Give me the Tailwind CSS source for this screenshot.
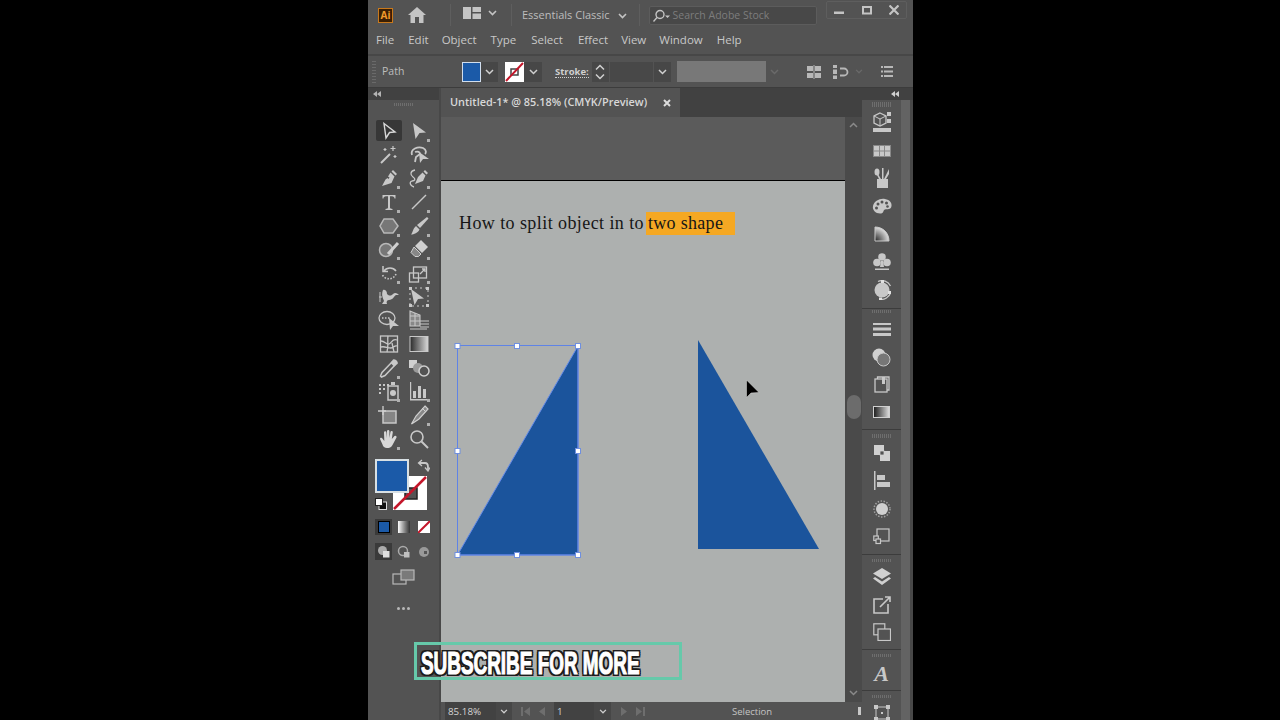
<!DOCTYPE html>
<html><head><meta charset="utf-8"><script src="https://cdn.jsdelivr.net/npm/@tailwindcss/browser@4"></script></head>
<body class="bg-black overflow-hidden">
<div class="relative ml-[368px] w-[545px] h-[720px] bg-[#535353] flex flex-col overflow-hidden font-['Open_Sans',sans-serif] text-[#d4d4d4]">

<!-- title bar -->
<div class="h-[30px] shrink-0 flex items-center bg-[#535353] relative">
  <div class="ml-[10px] w-[15px] h-[15px] bg-[#3a1f04] border border-[#c9791c] flex items-center justify-center text-[10px] leading-none font-bold text-[#f09a2c]">Ai</div>
  <svg class="ml-[15px] w-[18px] h-[16px]" viewBox="0 0 18 16" fill="#c4c4c4"><path d="M9 0 L18 8 H15.500 V16 H11 V10 H7 V16 H2.500 V8 H0Z"/></svg>
  <div class="ml-[24px] w-px h-[22px] bg-[#5e5e5e]"></div>
  <svg class="ml-[12px] w-[18px] h-[12px] -mt-[5px]" viewBox="0 0 18 12" fill="#c4c4c4"><path d="M0 0H8V12H0ZM9.500 0H18V5H9.500ZM9.500 6.500H18V12H9.500Z"/></svg>
  <svg class="ml-[7px] w-[9px] h-[6px] -mt-[4px]" viewBox="0 0 9 6" fill="none" stroke="#c4c4c4" stroke-width="1.600"><path d="M1 1L4.500 4.500L8 1"/></svg>
  <div class="ml-[14px] w-px h-[22px] bg-[#5e5e5e]"></div>
  <span class="ml-[10px] text-[11px] leading-none text-[#bdbdbd] -mt-[1px] whitespace-nowrap">Essentials Classic</span>
  <svg class="ml-[8px] w-[9px] h-[6px] mt-[2px]" viewBox="0 0 9 6" fill="none" stroke="#c4c4c4" stroke-width="1.600"><path d="M1 1L4.500 4.500L8 1"/></svg>
  <div class="ml-[12px] w-px h-[22px] bg-[#5e5e5e]"></div>
  <div class="ml-[9px] w-[168px] h-[19px] bg-[#484848] border border-[#5c5c5c] rounded-[2px] flex items-center mt-[1px]">
    <svg class="ml-[2px] w-[20px] h-[14px]" viewBox="0 0 20 14" fill="none" stroke="#c4c4c4" stroke-width="1.400"><circle cx="8" cy="5.500" r="4"/><path d="M5 8.500L1.500 12.500"/><path d="M13 6.500h5l-2.500 2.500z" fill="#c4c4c4" stroke="none"/></svg>
    <span class="ml-[1px] text-[10.500px] leading-none text-[#7d7d7d] whitespace-nowrap">Search Adobe Stock</span>
  </div>
  <div class="ml-[9px] w-[81px] h-[18px] border border-[#5e5e5e] rounded-[2px] flex items-center -mt-[11px]">
    <svg class="ml-[7px] w-[10px] h-[10px]" viewBox="0 0 10 10" fill="#c4c4c4"><rect y="6.500" width="10" height="2.500"/></svg>
    <svg class="ml-[18px] w-[10px] h-[10px]" viewBox="0 0 10 10" fill="none" stroke="#c4c4c4" stroke-width="2"><rect x="1" y="2" width="8" height="6.500"/></svg>
    <svg class="ml-[17px] w-[10px] h-[10px]" viewBox="0 0 10 10" fill="none" stroke="#c4c4c4" stroke-width="2.200"><path d="M.5 .5L9.500 9.500M9.500 .5L.5 9.500"/></svg>
  </div>
</div>

<!-- menu -->
<div class="h-[24px] shrink-0 flex items-center pb-[4px] text-[11.500px] leading-none text-[#c8c8c8] whitespace-nowrap">
  <span class="ml-[8px]">File</span><span class="ml-[14px]">Edit</span><span class="ml-[13px]">Object</span><span class="ml-[14px]">Type</span><span class="ml-[15px]">Select</span><span class="ml-[15px]">Effect</span><span class="ml-[13px]">View</span><span class="ml-[13px]">Window</span><span class="ml-[14px]">Help</span>
</div>

<!-- control bar -->
<div class="h-[34px] shrink-0 flex items-center border-t-2 border-b border-t-[#474747] border-b-[#3c3c3c] bg-[#535353]">
  <div class="ml-[4px] w-[4px] h-[22px] bg-[repeating-linear-gradient(0deg,#6a6a6a_0_1px,transparent_1px_3px)]"></div>
  <span class="ml-[6px] w-[80px] text-[10.500px] leading-none text-[#bdbdbd]">Path</span>
  <div class="w-[19px] h-[20px] bg-[#1b5aa8] border border-white/80"></div>
  <div class="w-[17px] h-[20px] bg-[#474747] flex items-center justify-center"><svg class="w-[9px] h-[6px]" viewBox="0 0 9 6" fill="none" stroke="#d0d0d0" stroke-width="1.500"><path d="M1 1L4.500 4.500L8 1"/></svg></div>
  <svg class="ml-[7px] w-[19px] h-[20px]" viewBox="0 0 19 20"><rect width="19" height="20" fill="#fff"/><rect x="6" y="7" width="7" height="6" fill="none" stroke="#444" stroke-width="1.500"/><path d="M1 19L18 1" stroke="#c4162a" stroke-width="2"/></svg>
  <div class="w-[18px] h-[20px] bg-[#474747] flex items-center justify-center"><svg class="w-[9px] h-[6px]" viewBox="0 0 9 6" fill="none" stroke="#d0d0d0" stroke-width="1.500"><path d="M1 1L4.500 4.500L8 1"/></svg></div>
  <span class="ml-[13px] mt-[2px] text-[9.500px] leading-none font-bold text-[#cfcfcf] border-b border-dotted border-[#cfcfcf] pb-[1px]">Stroke:</span>
  <div class="ml-[3px] w-[17px] h-[20px] bg-[#474747] flex items-center justify-center"><svg class="w-[10px] h-[16px]" viewBox="0 0 10 16" fill="none" stroke="#d0d0d0" stroke-width="1.500"><path d="M1 5.500L5 1.500L9 5.500M1 10.500L5 14.500L9 10.500"/></svg></div>
  <div class="ml-px w-[43px] h-[20px] bg-[#484848]"></div>
  <div class="ml-px w-[17px] h-[20px] bg-[#474747] flex items-center justify-center"><svg class="w-[9px] h-[6px]" viewBox="0 0 9 6" fill="none" stroke="#d0d0d0" stroke-width="1.500"><path d="M1 1L4.500 4.500L8 1"/></svg></div>
  <div class="ml-[6px] w-[89px] h-[21px] bg-[#787878]"></div>
  <svg class="ml-[4px] w-[9px] h-[6px]" viewBox="0 0 9 6" fill="none" stroke="#6a6a6a" stroke-width="1.500"><path d="M1 1L4.500 4.500L8 1"/></svg>
  <svg class="ml-[28px] w-[14px] h-[14px]" viewBox="0 0 14 14" fill="#b8b8b8"><path d="M0 1H6V6H0ZM8 1H14V6H8ZM0 8H6V13H0ZM8 8H14V13H8Z"/><path d="M7 0V14" stroke="#b8b8b8"/></svg>
  <svg class="ml-[12px] w-[16px] h-[14px]" viewBox="0 0 16 14" fill="#b8b8b8"><path d="M0 0H4V3H0ZM0 4.500H4V9H0ZM0 10.500H4V14H0Z"/><path d="M7 3.500H11A3.500 3.500 0 0 1 11 10.500H7" fill="none" stroke="#b8b8b8" stroke-width="1.800"/></svg>
  <svg class="ml-[6px] w-[8px] h-[5px]" viewBox="0 0 9 6" fill="none" stroke="#6a6a6a" stroke-width="1.500"><path d="M1 1L4.500 4.500L8 1"/></svg>
  <svg class="ml-[18px] w-[12px] h-[11px]" viewBox="0 0 12 11" fill="#b8b8b8"><path d="M0 0H2V2H0ZM3 0H12V2H3ZM0 4.500H2V6.500H0ZM3 4.500H12V6.500H3ZM0 9H2V11H0ZM3 9H12V11H3Z"/></svg>
</div>

<!-- main -->
<div class="flex-1 flex min-h-0">
  <!-- left tool panel -->
  <div class="w-[73px] shrink-0 flex flex-col bg-[#535353] border-r-2 border-[#484848]">
    <div class="h-[12px] shrink-0 bg-[#414141] flex items-center pl-[5px]"><svg class="w-[8px] h-[6px]" viewBox="0 0 8 6" fill="#b4b4b4"><path d="M4 0V6L0 3ZM8 0V6L4 3Z"/></svg></div>
    <div class="h-[9px] shrink-0 flex items-center justify-center"><div class="w-[20px] h-[3px] bg-[repeating-linear-gradient(90deg,#6e6e6e_0_1px,transparent_1px_2px)]"></div></div>

    <div class="ml-[7px] mt-[10px] grid grid-cols-[28px_32px] auto-rows-[23.680px] justify-items-center items-center">
      <div class="w-[26px] h-[21px] bg-[#373737] rounded-[2px] flex items-center justify-center"><svg class="w-[16px] h-[18px]" viewBox="0 0 16 18" fill="none" stroke="#d8d8d8" stroke-width="1.400"><path d="M3 1.500L14 10L8.500 10.500L5 16Z"/></svg></div>
      <svg class="w-[22px] h-[22px]" viewBox="0 0 22 22" fill="#c8c8c8"><path d="M5 3L18 12.500L11.500 13L7.500 19Z"/><path d="M19 19h3v3h-3z" fill="#b0b0b0"/></svg>

      <svg class="w-[22px] h-[22px]" viewBox="0 0 22 22" fill="none" stroke="#c8c8c8" stroke-width="2"><path d="M3 19L12 10"/><path d="M15 2v5M12.500 4.500h5M7 4v3M5.500 5.500h3M17 11v3M15.500 12.500h3" stroke-width="1.200"/></svg>
      <svg class="w-[22px] h-[22px]" viewBox="0 0 22 22" fill="none" stroke="#c8c8c8" stroke-width="1.800"><path d="M4 11C2 5 10 2 15 4C19 6 18 9 17 10"/><path d="M7 8C10 7 12 8 12 10L8 13L7 18" /><path d="M11 8L21 15L15 15L12 19Z" fill="#c8c8c8" stroke="none"/></svg>

      <svg class="w-[22px] h-[22px]" viewBox="0 0 22 22" fill="#c8c8c8"><path d="M15 3L19 7L17.500 8.500L13.500 4.500ZM12.500 5.500L16.500 9.500L13.500 16L4 19L7.500 12.500L9.500 11L10.500 12L11.500 10.500L10 9.500Z"/><path d="M19 19h3v3h-3z" fill="#b0b0b0"/></svg>
      <svg class="w-[22px] h-[22px]" viewBox="0 0 22 22" fill="#c8c8c8"><path d="M17 3L20 6L18.500 7.500L15.500 4.500ZM14.500 5.500L17.500 8.500L15 14L7 17L10 10Z"/><path d="M7 3C2 4 2 8 5 10C8 12 7 14 4 14C1 15 2 19 6 20" fill="none" stroke="#c8c8c8" stroke-width="1.300"/><path d="M19 19h3v3h-3z" fill="#b0b0b0"/></svg>

      <svg class="w-[22px] h-[22px]" viewBox="0 0 22 22" fill="#c8c8c8"><path d="M4.500 4H17.500V7.500H16.500C16.500 5.800 15.500 5.200 12 5.200V16.500C12 17.500 13 17.800 14.500 18V19H7.500V18C9 17.800 10 17.500 10 16.500V5.200C6.500 5.200 5.500 5.800 5.500 7.500H4.500Z"/><path d="M19 19h3v3h-3z" fill="#b0b0b0"/></svg>
      <svg class="w-[22px] h-[22px]" viewBox="0 0 22 22" fill="none" stroke="#c8c8c8" stroke-width="1.500"><path d="M4 18L18 4"/><path d="M19 19h3v3h-3z" fill="#b0b0b0" stroke="none"/></svg>

      <svg class="w-[22px] h-[22px]" viewBox="0 0 22 22"><path d="M6 4H15L20 11L15 18H6L2 11Z" fill="#777" stroke="#b8b8b8" stroke-width="1.500"/><path d="M19 19h3v3h-3z" fill="#b0b0b0"/></svg>
      <svg class="w-[22px] h-[22px]" viewBox="0 0 22 22" fill="#c8c8c8"><path d="M19 2L20.500 3.500L12 13L9 10Z"/><path d="M8 11L11.500 14.500C10 18 6 19.500 3 19.500C5 17.500 4.500 14 8 11Z"/><path d="M19 19h3v3h-3z" fill="#b0b0b0"/></svg>

      <svg class="w-[22px] h-[22px]" viewBox="0 0 22 22"><circle cx="8" cy="12" r="6.500" fill="#777" stroke="#b8b8b8" stroke-width="1.500"/><path d="M10 16L20 5" stroke="#d0d0d0" stroke-width="3"/><path d="M19 19h3v3h-3z" fill="#b0b0b0"/></svg>
      <svg class="w-[22px] h-[22px]" viewBox="0 0 22 22" fill="#d0d0d0"><path d="M13 2L20 9L14 15L7 8Z"/><path d="M6 9L13 16L10.500 18.500H7L3 14.500Z" fill="#888" stroke="#d0d0d0"/><path d="M19 19h3v3h-3z" fill="#b0b0b0"/></svg>

      <svg class="w-[22px] h-[22px]" viewBox="0 0 22 22" fill="none" stroke="#c8c8c8" stroke-width="1.600"><path d="M6 9A7.500 7.500 0 0 1 18 9" /><path d="M5 4V9.500H10" stroke-width="1.500"/><path d="M18 12A7.500 7.500 0 0 1 4 12" stroke-dasharray="1.500 1.500"/><path d="M19 19h3v3h-3z" fill="#b0b0b0" stroke="none"/></svg>
      <svg class="w-[22px] h-[22px]" viewBox="0 0 22 22" fill="none" stroke="#c8c8c8" stroke-width="1.300"><rect x="1.500" y="11" width="9" height="9"/><rect x="5.500" y="5" width="13" height="11"/><path d="M12 12L17 7M14 7H17V10" /><path d="M19 19h3v3h-3z" fill="#b0b0b0" stroke="none"/></svg>

      <svg class="w-[22px] h-[22px]" viewBox="0 0 22 22" fill="#c8c8c8"><path d="M5 4C8 3 9 6 9 8C12 11 14 9 15 8C17 6 19 7 21 9L18 9C16 10 15 14 11 14C9 14 8 16 9 18L4 18L6 15C5 12 3 9 5 4Z"/><path d="M2 6v10M1 11h3" stroke="#c8c8c8" fill="none"/></svg>
      <svg class="w-[22px] h-[22px]" viewBox="0 0 22 22" fill="#c8c8c8"><path d="M3 3L16 12.500L10 13L6.500 19Z"/><path d="M2 2H20V20H2Z" fill="none" stroke="#c8c8c8" stroke-width="1" stroke-dasharray="2 3"/><path d="M1 1h3v3H1zM18 1h3v3h-3zM18 18h3v3h-3zM1 18h3v3H1z"/></svg>

      <svg class="w-[22px] h-[22px]" viewBox="0 0 22 22" fill="none" stroke="#c8c8c8" stroke-width="1.300"><ellipse cx="9" cy="9" rx="8" ry="6.500"/><path d="M4 9h8" stroke-dasharray="1.500 1.500"/><path d="M11 9L21 17L15 17L12 21Z" fill="#c8c8c8" stroke="none"/></svg>
      <svg class="w-[22px] h-[22px]" viewBox="0 0 22 22" fill="none" stroke="#c8c8c8" stroke-width="1.100"><path d="M2 2L2 17L12 17L12 6Z" fill="#888"/><path d="M2 7H12M2 12H12M7 4V17"/><path d="M12 12H21M12 15H21M12 18H21M2 20H19"/></svg>

      <svg class="w-[22px] h-[22px]" viewBox="0 0 22 22" fill="none" stroke="#c8c8c8" stroke-width="1.300"><rect x="2.500" y="3" width="17" height="16"/><path d="M3 8C7 8 8 12 11 11C14 10 14 5 19 7M10 3C9 8 11 11 9 19M3 14C7 13 9 15 13 15C16 15 16 12 19 13M14 10L16 19"/></svg>
      <svg class="w-[22px] h-[22px]" viewBox="0 0 22 22"><defs><linearGradient id="g1"><stop offset="0" stop-color="#2a2a2a"/><stop offset="1" stop-color="#d8d8d8"/></linearGradient></defs><rect x="2" y="3.500" width="18" height="15" fill="url(#g1)" stroke="#c8c8c8"/></svg>

      <svg class="w-[22px] h-[22px]" viewBox="0 0 22 22" fill="#c8c8c8"><path d="M14 5L17 8L7 18.500L3.500 20L2.500 19L4 15.500Z" fill="none" stroke="#c8c8c8" stroke-width="1.500"/><path d="M12.500 6L15 2.500C17 1 21 5 19.500 7L16 9.500Z"/><path d="M19 19h3v3h-3z" fill="#b0b0b0"/></svg>
      <svg class="w-[22px] h-[22px]" viewBox="0 0 22 22"><rect x="1" y="3" width="8" height="8" fill="#d0d0d0"/><circle cx="10" cy="11" r="5" fill="#9a9a9a"/><circle cx="16" cy="14" r="5" fill="#535353" stroke="#d0d0d0" stroke-width="1.500"/></svg>

      <svg class="w-[22px] h-[22px]" viewBox="0 0 22 22" fill="#c8c8c8"><path d="M1 4h2v2H1zM5 4h2v2H5zM9 4h2v2H9zM1 8h2v2H1zM5 8h2v2H5zM1 12h2v2H1z"/><path d="M13 2h4v3h-4z"/><path d="M10 6h10v14H10Z" fill="none" stroke="#c8c8c8" stroke-width="1.500"/><circle cx="15" cy="13" r="3"/><path d="M19 19h3v3h-3z" fill="#b0b0b0"/></svg>
      <svg class="w-[22px] h-[22px]" viewBox="0 0 22 22" fill="#c8c8c8"><path d="M2 2h1.200v17H21v1.500H2z"/><path d="M5 11h3v7H5zM10 6h3v12h-3zM15 9h3v9h-3z"/><path d="M19 19h3v3h-3z" fill="#b0b0b0"/></svg>

      <svg class="w-[22px] h-[22px]" viewBox="0 0 22 22"><path d="M5 7H18V19H5Z" fill="#858585" stroke="#c8c8c8" stroke-width="1.500"/><path d="M0 7H8M5 2V11" stroke="#d0d0d0" stroke-width="1.300"/></svg>
      <svg class="w-[22px] h-[22px]" viewBox="0 0 22 22"><path d="M17 2L20 5L11 15L3.500 20L8 12Z" fill="#888" stroke="#d0d0d0" stroke-width="1.200"/><path d="M14 4L18 8" stroke="#d0d0d0"/><path d="M19 19h3v3h-3z" fill="#b0b0b0"/></svg>

      <svg class="w-[22px] h-[22px]" viewBox="0 0 22 22" fill="#d8d8d8"><path d="M6 4.500A1.200 1.200 0 0 1 8.400 4.500L9 10V3.200A1.200 1.200 0 0 1 11.400 3.200V10L12.500 3.800A1.200 1.200 0 0 1 14.800 4.200L13.800 11L16.500 8A1.300 1.300 0 0 1 18.500 9.500L14.500 17C13.500 19.500 11 20 9 20C6.500 20 5 18.500 4.500 16.500L2 11A1.200 1.200 0 0 1 4 10L6.300 13Z"/><path d="M19 19h3v3h-3z" fill="#b0b0b0"/></svg>
      <svg class="w-[22px] h-[22px]" viewBox="0 0 22 22" fill="none" stroke="#c8c8c8" stroke-width="1.600"><circle cx="9" cy="9" r="6"/><path d="M13.500 13.500L20 20" stroke-width="2"/></svg>
    </div>

    <!-- fill / stroke -->
    <div class="relative mt-[9px] ml-[7px] w-[58px] h-[52px] shrink-0">
      <svg class="absolute left-[18px] top-[17px] w-[34px] h-[34px]" viewBox="0 0 34 34"><rect width="34" height="34" fill="#fff"/><rect x="12" y="12" width="12" height="11" fill="#535353" stroke="#222" stroke-width="1.500"/><path d="M1 33L33 1" stroke="#c4162a" stroke-width="2.500"/></svg>
      <div class="absolute left-0 top-0 w-[34px] h-[34px] bg-[#1b5aa8] border-2 border-[#d8e0e4]"></div>
      <svg class="absolute left-[42px] top-0 w-[13px] h-[13px]" viewBox="0 0 13 13" fill="none" stroke="#c8c8c8" stroke-width="1.800"><path d="M2 4H8C10 4 11 5 11 8V11"/><path d="M5 1L1.500 4L5 7M8 8.500L11 12L13 8.500" stroke-width="1.300"/></svg>
      <svg class="absolute left-0 top-[39px] w-[12px] h-[12px]" viewBox="0 0 12 12"><rect x="4" y="4" width="7.500" height="7.500" fill="#111" stroke="#ddd"/><rect x=".5" y=".5" width="7" height="7" fill="#fff" stroke="#222"/></svg>
    </div>
    <div class="mt-[8px] ml-[7px] w-[57px] h-[16px] flex gap-[3px] shrink-0">
      <div class="w-[17px] h-[16px] bg-[#3a3a3a] flex items-center justify-center"><div class="w-[12px] h-[12px] bg-[#1b5aa8] border border-black"></div></div>
      <div class="w-[17px] h-[16px] flex items-center justify-center"><div class="w-[12px] h-[12px] bg-gradient-to-r from-white to-[#333]"></div></div>
      <div class="w-[17px] h-[16px] flex items-center justify-center"><svg class="w-[12px] h-[12px]" viewBox="0 0 12 12"><rect width="12" height="12" fill="#fff"/><path d="M0 12L12 0" stroke="#c4162a" stroke-width="2"/></svg></div>
    </div>
    <div class="mt-[8px] ml-[7px] w-[57px] h-[17px] flex gap-[3px] shrink-0">
      <div class="w-[17px] h-[17px] bg-[#3a3a3a] flex items-center justify-center"><svg class="w-[13px] h-[13px]" viewBox="0 0 13 13"><circle cx="5.500" cy="5.500" r="4.500" fill="#aaa"/><rect x="6" y="6" width="6.500" height="6.500" fill="#e0e0e0"/></svg></div>
      <div class="w-[17px] h-[17px] flex items-center justify-center"><svg class="w-[13px] h-[13px]" viewBox="0 0 13 13"><circle cx="6" cy="6" r="4.500" fill="none" stroke="#aaa" stroke-width="1.500"/><rect x="7" y="7" width="5.500" height="5.500" fill="#c0c0c0"/></svg></div>
      <div class="w-[17px] h-[17px] flex items-center justify-center"><svg class="w-[12px] h-[12px]" viewBox="0 0 12 12"><circle cx="6" cy="6" r="5" fill="#999"/><rect x="6" y="5" width="3" height="3" fill="#555"/></svg></div>
    </div>
    <svg class="mt-[9px] ml-[24px] w-[23px] h-[16px] shrink-0" viewBox="0 0 23 16" fill="none" stroke="#b8b8b8" stroke-width="1.200"><rect x="1" y="5" width="13" height="10" fill="#535353"/><rect x="9" y="1" width="13" height="10" fill="#7a7a7a"/></svg>
    <div class="mt-[22px] ml-[29px] flex gap-[2px] shrink-0"><div class="w-[3px] h-[3px] bg-[#b8b8b8] rounded-full"></div><div class="w-[3px] h-[3px] bg-[#b8b8b8] rounded-full"></div><div class="w-[3px] h-[3px] bg-[#b8b8b8] rounded-full"></div></div>
  </div>

  <!-- centre -->
  <div class="w-[421px] shrink-0 flex flex-col min-w-0">
    <!-- tabs -->
    <div class="h-[29px] shrink-0 flex bg-[#414141]">
      <div class="w-[239px] h-full bg-[#535353] flex items-center">
        <span class="ml-[9px] text-[10.900px] leading-none font-semibold text-[#d8d8d8] whitespace-nowrap">Untitled-1* @ 85.18% (CMYK/Preview)</span>
        <svg class="ml-[16px] w-[8px] h-[8px]" viewBox="0 0 8 8" stroke="#dcdcdc" stroke-width="2"><path d="M1 1L7 7M7 1L1 7"/></svg>
      </div>
    </div>
    <div class="flex-1 flex min-h-0">
      <!-- canvas -->
      <div class="relative w-[404px] shrink-0 flex flex-col">
        <div class="h-[64px] shrink-0 bg-[#5b5b5b] border-b border-black"></div>
        <div class="relative flex-1 bg-[#adb0af] overflow-hidden">
          <div class="absolute left-[18px] top-[31px] h-[23px] flex items-center pb-[2px] font-['Liberation_Serif',serif] text-[18px] leading-none tracking-[0.42px] text-[#161616] whitespace-nowrap">How to split object in to</div>
          <div class="absolute left-[205px] top-[31px] w-[89px] h-[23px] bg-[#f5a823] flex items-center pl-[2px] pb-[2px] font-['Liberation_Serif',serif] text-[18px] leading-none tracking-[0.3px] text-[#161616] whitespace-nowrap">two shape</div>
          <svg class="absolute left-0 top-0 w-[404px] h-[521px]" viewBox="441 181 404 521">
            <path d="M457.500 555L578 346V555Z" fill="#1b549c"/>
            <path d="M698 340V549H819Z" fill="#1b549c"/>
            <path d="M457.500 555L578 346V555Z" fill="none" stroke="#648ae8"/>
            <rect x="457.500" y="345.500" width="120.500" height="209.500" fill="none" stroke="#5f83e6"/>
            <g fill="#fff" stroke="#6f8fdf">
              <rect x="455" y="343.500" width="5" height="5"/><rect x="514.500" y="343.500" width="5" height="5"/><rect x="575.500" y="343.500" width="5" height="5"/>
              <rect x="455" y="448.500" width="5" height="5"/><rect x="575.500" y="448.500" width="5" height="5"/>
              <rect x="455" y="552.500" width="5" height="5"/><rect x="514.500" y="552.500" width="5" height="5"/><rect x="575.500" y="552.500" width="5" height="5"/>
            </g>
            <path d="M746.500 380V397.500L751 393L759 392.500Z" fill="#000" stroke="#ddd" stroke-width=".5"/>
          </svg>
        </div>
        <!-- status -->
        <div class="h-[18px] shrink-0 flex items-center bg-[#535353] text-[9.800px] leading-none text-[#d4d4d4]">
          <div class="ml-[4px] w-[51px] h-full bg-[#424242] flex items-center pl-[3px] pt-[2px]">85.18%</div>
          <div class="w-[16px] h-full bg-[#474747] flex items-center justify-center"><svg class="w-[8px] h-[5px]" viewBox="0 0 9 6" fill="none" stroke="#d0d0d0" stroke-width="1.500"><path d="M1 1L4.500 4.500L8 1"/></svg></div>
          <svg class="ml-[9px] w-[32px] h-[9px]" viewBox="0 0 32 9" fill="#6e6e6e"><path d="M0 0h2v9H0zM9 0V9L3 4.500zM24 0V9L18 4.500z"/></svg>
          <div class="ml-[1px] w-[40px] h-full bg-[#424242] flex items-center pl-[3px] pt-[2px]">1</div>
          <div class="w-[17px] h-full bg-[#474747] flex items-center justify-center"><svg class="w-[8px] h-[5px]" viewBox="0 0 9 6" fill="none" stroke="#d0d0d0" stroke-width="1.500"><path d="M1 1L4.500 4.500L8 1"/></svg></div>
          <svg class="ml-[10px] w-[24px] h-[9px]" viewBox="0 0 24 9" fill="#6e6e6e"><path d="M0 0V9L6 4.500zM15 0V9L21 4.500zM22 0h2v9h-2z"/></svg>
          <span class="ml-[87px] pt-[2px] text-[9.500px] text-[#c4c4c4]">Selection</span>
        </div>
      </div>
      <!-- scrollbar -->
      <div class="w-[17px] shrink-0 bg-[#4a4a4a] flex flex-col items-center">
        <svg class="mt-[5px] w-[9px] h-[6px] shrink-0" viewBox="0 0 9 6" fill="none" stroke="#8a8a8a" stroke-width="1.500"><path d="M1 5L4.500 1.500L8 5"/></svg>
        <div class="mt-[267px] w-[14px] h-[24px] shrink-0 bg-[#6c6c6c] rounded-[7px]"></div>
        <svg class="mt-[271px] w-[9px] h-[6px] shrink-0" viewBox="0 0 9 6" fill="none" stroke="#8a8a8a" stroke-width="1.500"><path d="M1 1L4.500 4.500L8 1"/></svg>
        <div class="mt-auto w-full h-[18px] shrink-0 bg-[#535353] flex items-center justify-end pr-px"><div class="w-[3px] h-[8px] bg-[#c8c8c8]"></div></div>
      </div>
    </div>
  </div>

  <!-- right panels -->
  <div class="w-[39px] shrink-0 flex flex-col bg-[#535353]">
    <div class="h-[12px] shrink-0 bg-[#414141] flex items-center justify-end pr-[2px]"><svg class="w-[8px] h-[6px]" viewBox="0 0 8 6" fill="#d0d0d0"><path d="M4 0V6L0 3ZM8 0V6L4 3Z"/></svg></div>

    <div class="h-[209px] shrink-0 border-b border-[#3c3c3c] flex flex-col items-center">
      <div class="mt-[2px] h-[5px] w-[20px] shrink-0 bg-[repeating-linear-gradient(90deg,#6e6e6e_0_1px,transparent_1px_2px)]"></div>
      <div class="flex flex-col items-center">
        <svg class="mt-[4px] w-[20px] h-[22px]" viewBox="0 0 20 22" fill="#c8c8c8"><path d="M8 2L14 5V12L8 15L2 12V5Z" fill="none" stroke="#c8c8c8" stroke-width="1.300"/><path d="M2 5L8 8L14 5M8 8V15" stroke="#c8c8c8" fill="none"/><path d="M15 1h4v4h-4zM15 8h4v4h-4zM1 17h18v4H1z"/></svg>
        <svg class="mt-[12px] w-[18px] h-[12px]" viewBox="0 0 18 12" fill="#c8c8c8"><rect x="0" y="0" width="18" height="12" fill="#888"/><path d="M1 1h5v4.500H1zM7 1h4v4.500H7zM12 1h5v4.500h-5zM1 6.500h5V11H1zM7 6.500h4V11H7zM12 6.500h5V11h-5z"/></svg>
        <svg class="mt-[10px] w-[18px] h-[21px]" viewBox="0 0 18 21" fill="#c8c8c8"><path d="M4 12h11v9H4z"/><ellipse cx="4" cy="5" rx="2.500" ry="3.500"/><path d="M4 8L6 12H8L5 7ZM9 1h1.500v11H9zM16 2L14 6L11 12H13L16 7Z"/></svg>
        <svg class="mt-[10px] w-[20px] h-[16px]" viewBox="0 0 20 16"><path d="M1 8C2 3 8 0 13 1C18 2 20 5 19.500 8C19 12 15 11 13 11.500C11 12 12 15 9 15.500C4 16 0 12 1 8Z" fill="#c8c8c8"/><g fill="#535353"><circle cx="6" cy="6" r="1.500"/><circle cx="10" cy="4" r="1.500"/><circle cx="14.500" cy="5" r="1.500"/><circle cx="15.500" cy="8.500" r="1.300"/><circle cx="4.500" cy="10" r="1.500"/></g></svg>
        <svg class="mt-[12px] w-[16px] h-[16px]" viewBox="0 0 16 16"><defs><radialGradient id="g2" cx="0" cy="1" r="1"><stop offset="0" stop-color="#222"/><stop offset="1" stop-color="#ddd"/></radialGradient></defs><path d="M1 1C9 1 15 7 15 15H1Z" fill="url(#g2)" stroke="#c8c8c8"/></svg>
        <svg class="mt-[11px] w-[18px] h-[17px]" viewBox="0 0 18 17" fill="#c8c8c8"><circle cx="9" cy="4" r="3.800"/><circle cx="4" cy="9.500" r="3.800"/><circle cx="14" cy="9.500" r="3.800"/><path d="M8 8h2l1 6H7zM2 15.500h14V17H2z"/></svg>
        <svg class="mt-[10px] w-[20px] h-[20px]" viewBox="0 0 20 20"><circle cx="10" cy="10" r="7.500" fill="#c8c8c8"/><path d="M6 1.500A9.500 9.500 0 0 1 18.500 6M18.500 13A9.500 9.500 0 0 1 8 19.300" fill="none" stroke="#c8c8c8" stroke-width="1.300"/><path d="M9 0h3v3H9zM16 11h3v3h-3zM7 17.500h3v2.500H7z" fill="#e0e0e0"/></svg>
      </div>
    </div>

    <div class="h-[121px] shrink-0 border-b border-[#3c3c3c] flex flex-col items-center">
      <div class="mt-[1px] h-[3px] w-[20px] shrink-0 bg-[repeating-linear-gradient(90deg,#6e6e6e_0_1px,transparent_1px_2px)]"></div>
      <svg class="mt-[10px] w-[18px] h-[13px] shrink-0" viewBox="0 0 18 13" fill="#c8c8c8"><path d="M0 0h18v2H0zM0 4.500h18v3H0zM0 10h18v3H0z"/></svg>
      <svg class="mt-[12px] w-[19px] h-[19px] shrink-0" viewBox="0 0 19 19"><circle cx="7" cy="7" r="6.500" fill="#d0d0d0"/><circle cx="11.500" cy="11.500" r="6.500" fill="#777" stroke="#c8c8c8"/></svg>
      <svg class="mt-[9px] w-[16px] h-[17px] shrink-0" viewBox="0 0 16 17" fill="none" stroke="#c8c8c8" stroke-width="1.300"><rect x="1" y="3" width="12" height="13"/><path d="M3.500 3V1H15V14H13"/><path d="M8 1h3v7h-3z" fill="#c8c8c8" stroke="none"/></svg>
      <svg class="mt-[13px] w-[17px] h-[12px] shrink-0" viewBox="0 0 17 12"><defs><linearGradient id="g3"><stop offset="0" stop-color="#1a1a1a"/><stop offset="1" stop-color="#e0e0e0"/></linearGradient></defs><rect x=".5" y=".5" width="16" height="11" fill="url(#g3)" stroke="#d0d0d0"/></svg>
    </div>

    <div class="h-[125px] shrink-0 border-b border-[#3c3c3c] flex flex-col items-center">
      <div class="mt-[4px] h-[4px] w-[20px] shrink-0 bg-[repeating-linear-gradient(90deg,#6e6e6e_0_1px,transparent_1px_2px)]"></div>
      <svg class="mt-[7px] w-[16px] h-[16px] shrink-0" viewBox="0 0 16 16"><rect width="10" height="10" fill="#d0d0d0"/><rect x="6" y="6" width="10" height="10" fill="#d0d0d0"/><rect x="6" y="6" width="4" height="4" fill="#535353" stroke="#d0d0d0" stroke-width=".8"/></svg>
      <svg class="mt-[10px] w-[16px] h-[19px] shrink-0" viewBox="0 0 16 19" fill="#c8c8c8"><path d="M0 0h1.500v19H0zM3 4h8v5H3zM3 11h13v5H3z"/></svg>
      <svg class="mt-[10px] w-[18px] h-[18px] shrink-0" viewBox="0 0 18 18"><circle cx="9" cy="9" r="6" fill="#d0d0d0"/><circle cx="9" cy="9" r="8" fill="none" stroke="#a0a0a0" stroke-width="1.500" stroke-dasharray="1.500 1.500"/></svg>
      <svg class="mt-[10px] w-[17px] h-[17px] shrink-0" viewBox="0 0 17 17" fill="none" stroke="#c8c8c8" stroke-width="1.200"><rect x="4" y="1" width="12" height="12"/><rect x=".8" y="8" width="4.500" height="4.500" fill="#535353"/><rect x="3" y="11" width="4.500" height="4.500" fill="#535353"/></svg>
    </div>

    <div class="h-[95px] shrink-0 border-b border-[#3c3c3c] flex flex-col items-center">
      <div class="mt-[4px] h-[3px] w-[20px] shrink-0 bg-[repeating-linear-gradient(90deg,#6e6e6e_0_1px,transparent_1px_2px)]"></div>
      <svg class="mt-[6px] w-[18px] h-[17px] shrink-0" viewBox="0 0 18 17" fill="#d0d0d0"><path d="M9 0L18 5.500L9 11L0 5.500Z"/><path d="M2 9L9 13.500L16 9L18 10.500L9 17L0 10.500Z"/></svg>
      <svg class="mt-[11px] w-[18px] h-[18px] shrink-0" viewBox="0 0 18 18" fill="none" stroke="#c8c8c8" stroke-width="1.600"><path d="M10 3H1V17H15V8"/><path d="M7 11L17 1M12 1H17V6"/></svg>
      <svg class="mt-[9px] w-[18px] h-[18px] shrink-0" viewBox="0 0 18 18" fill="none" stroke="#c8c8c8" stroke-width="1.200"><rect x=".8" y=".8" width="11" height="11"/><rect x="5" y="6" width="12.500" height="11.500" fill="#535353"/></svg>
    </div>

    <div class="h-[41px] shrink-0 border-b border-[#3c3c3c] flex flex-col items-center">
      <div class="mt-[4px] h-[3px] w-[20px] shrink-0 bg-[repeating-linear-gradient(90deg,#6e6e6e_0_1px,transparent_1px_2px)]"></div>
      <span class="mt-[6px] font-['Liberation_Serif',serif] italic font-bold text-[22px] leading-none text-[#c8c8c8]">A</span>
    </div>
    <div class="flex-1 flex flex-col items-center overflow-hidden">
      <div class="mt-[4px] h-[3px] w-[20px] shrink-0 bg-[repeating-linear-gradient(90deg,#6e6e6e_0_1px,transparent_1px_2px)]"></div>
      <svg class="mt-[7px] w-[16px] h-[16px] shrink-0" viewBox="0 0 16 16" fill="#c8c8c8"><path d="M2 2H14V14H2Z" fill="none" stroke="#c8c8c8"/><path d="M0 0h4v4H0zM12 0h4v4h-4zM0 12h4v4H0zM12 12h4v4h-4zM7 7h2v2H7z"/></svg>
    </div>
  </div>

  <!-- far right strip -->
  <div class="w-[12px] shrink-0 flex flex-col bg-[#484848]">
    <div class="h-[12px] shrink-0 bg-[#414141]"></div>
    <div class="w-[9px] flex-1 bg-[#636363]"></div>
  </div>
</div>

<!-- subscribe overlay -->
<div class="absolute left-[46px] top-[642px] w-[268px] h-[38px] border-[3px] border-[#66c9aa] overflow-visible">
  <span class="absolute left-[4px] top-[3px] origin-left scale-x-[0.61] font-['Liberation_Sans',sans-serif] font-bold text-[31px] leading-[32px] text-white whitespace-nowrap [-webkit-text-stroke:1.200px_#fff] [text-shadow:3px_0_#1c1c1c,-3px_0_#1c1c1c,0_2px_#1c1c1c,0_-2px_#1c1c1c,3px_2px_#1c1c1c,-3px_-2px_#1c1c1c,3px_-2px_#1c1c1c,-3px_2px_#1c1c1c]">SUBSCRIBE FOR MORE</span>
</div>
</div>
</body></html>
